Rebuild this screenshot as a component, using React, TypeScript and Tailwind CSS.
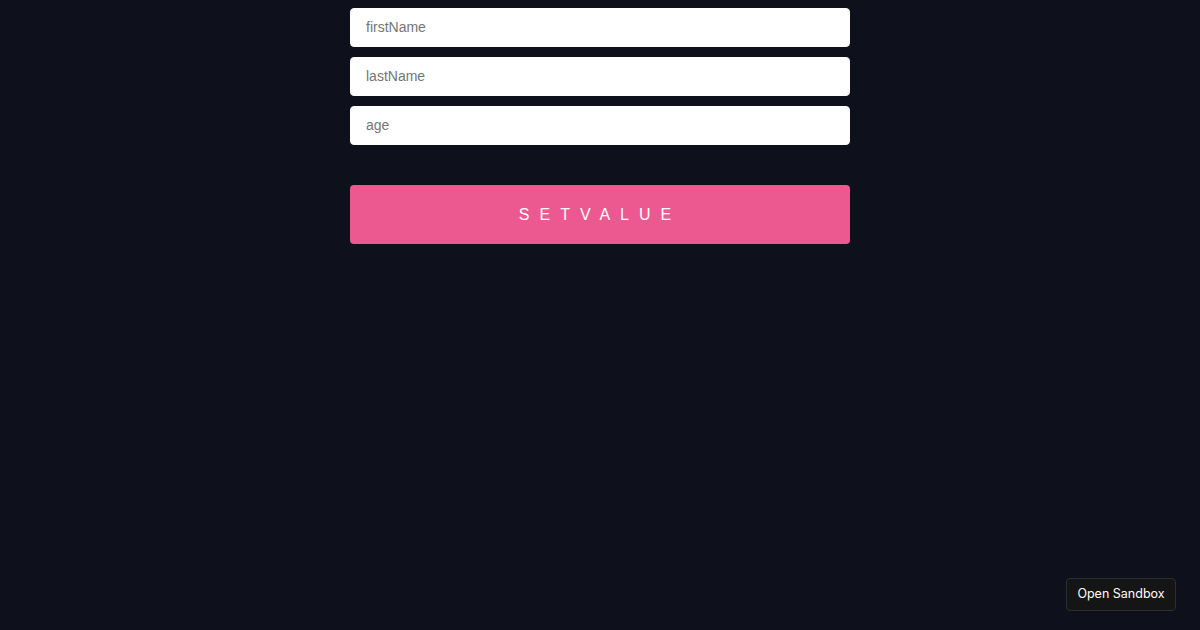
export default function App() {
  const fields = ["firstName", "lastName", "age"];
  return (
    <div className="min-h-[630px] bg-[#0e101c] pt-2 font-['Liberation_Sans',Arial,sans-serif]">
      <form className="mx-auto w-[500px]" onSubmit={(e) => e.preventDefault()}>
        {fields.map((f) => (
          <input
            key={f}
            name={f}
            placeholder={f}
            className="mb-[10px] block h-[39px] w-full rounded-[4px] border border-white bg-white px-[15px] pb-[2px] text-[14px] text-black outline-none placeholder:text-[#757575]"
          />
        ))}
        <button
          type="button"
          className="mt-[40px] block h-[59px] w-full rounded-[4px] bg-[#ec5990] text-[16px] font-thin uppercase tracking-[10px] text-white"
        >
          setValue
        </button>
      </form>
      <button
        type="button"
        className="fixed bottom-[19px] right-[24px] h-[33px] w-[110px] rounded-[4px] border border-[#2e2e2e] bg-[#151515] text-[12.5px] text-white font-['Inter',sans-serif]"
      >
        Open Sandbox
      </button>
    </div>
  );
}
